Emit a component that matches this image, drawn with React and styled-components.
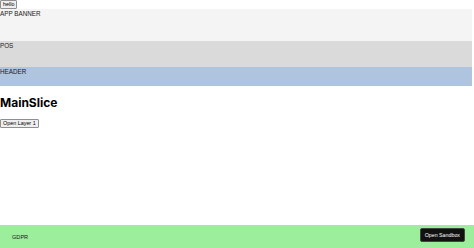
import React from "react";
import styled, { createGlobalStyle } from "styled-components";

const GlobalStyle = createGlobalStyle`
  html, body {
    margin: 0;
    padding: 0;
    background: #ffffff;
    font-family: "Liberation Sans", Arial, sans-serif;
  }
  #root {
    height: 248px;
  }
`;

const Page = styled.div`
  position: relative;
  height: 248px;
  width: 474px;
  overflow: hidden;
  color: #111;
`;

const SmallButton = styled.button`
  display: block;
  margin: 0;
  padding: 0 2px;
  height: 9px;
  font-family: "Liberation Sans", Arial, sans-serif;
  font-size: 5.4px;
  line-height: 7px;
  color: #000;
  background: #efefef;
  border: 1px solid #8f8f8f;
  border-radius: 1px;
`;

const Slice = styled.div`
  width: 472px;
  height: ${(p) => p.h}px;
  background: ${(p) => p.bg};
  font-size: 6.3px;
  line-height: 8px;
  color: #1a1a1a;
  padding-top: 1px;
  box-sizing: border-box;
`;

const Title = styled.h1`
  margin: 9px 0 8px;
  font-family: Inter, "Noto Sans", sans-serif;
  font-size: 12px;
  line-height: 16px;
  font-weight: 700;
  color: #000;
`;

const Footer = styled.footer`
  position: absolute;
  left: 0;
  right: 0;
  bottom: 0;
  height: 23px;
  background: #9ced9c;
  display: flex;
  align-items: center;
  justify-content: space-between;
  padding: 0 9px 0 12px;
`;

const FooterText = styled.span`
  font-size: 5.6px;
  color: #1a1a1a;
  margin-top: 1px;
`;

const SandboxButton = styled.button`
  height: 14px;
  padding: 0 4px;
  margin-top: -4px;
  font-family: "Liberation Sans", Arial, sans-serif;
  font-size: 5.3px;
  color: #fff;
  background: #111;
  border: 1px solid #444;
  border-radius: 2px;
`;

export default function App() {
  return (
    <Page>
      <GlobalStyle />
      <SmallButton>hello</SmallButton>
      <Slice h={32} bg="#f4f4f4">APP BANNER</Slice>
      <Slice h={26} bg="#dadada">POS</Slice>
      <Slice h={19} bg="#afc4df">HEADER</Slice>
      <Title>MainSlice</Title>
      <SmallButton>Open Layer 1</SmallButton>
      <Footer>
        <FooterText>GDPR</FooterText>
        <SandboxButton>Open Sandbox</SandboxButton>
      </Footer>
    </Page>
  );
}
